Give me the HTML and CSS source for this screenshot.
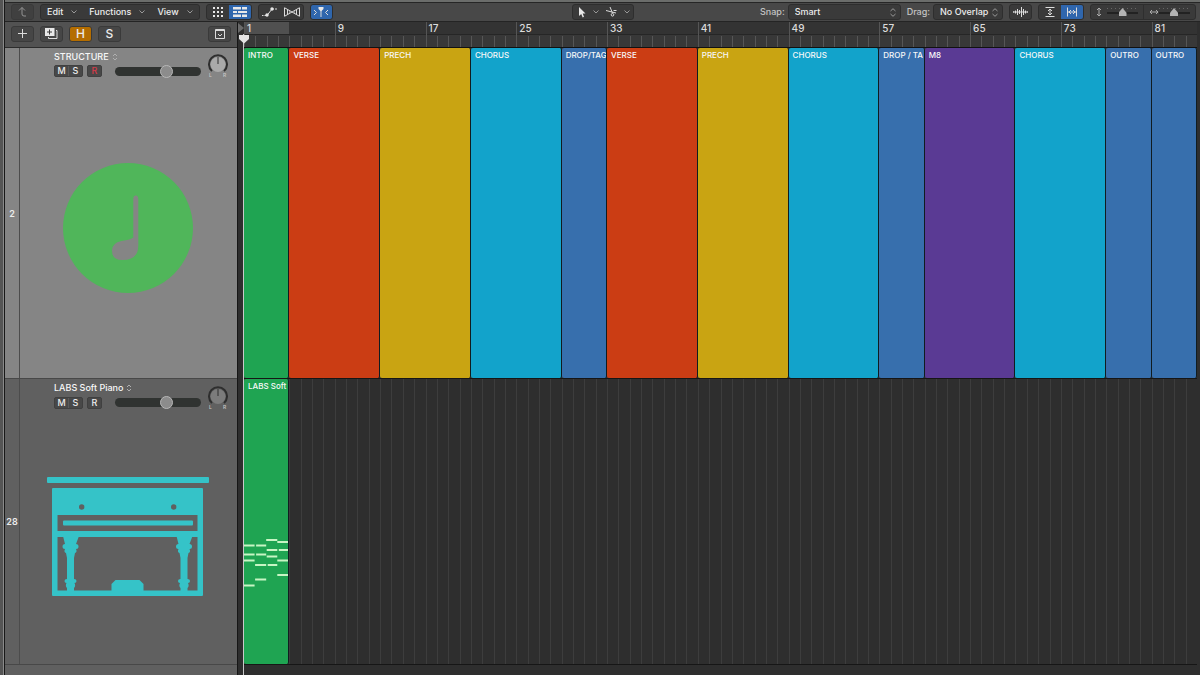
FILE: index.html
```html
<!DOCTYPE html>
<html lang="en">
<head>
    <meta charset="UTF-8">
    <meta name="viewport" content="width=device-width, initial-scale=1.0">
    <title>Tracks</title>
    <link rel="stylesheet" href="styles.css">
</head>
<body>
    <div class="edge"></div>
    <div class="window">
        <header class="toolbar">
            <button class="btn dim" aria-label="Up"><svg width="10" height="12" viewBox="0 0 10 12"><path d="M1 4.500 4 1.500 7 4.500M4 1.500V8q0 2 2 2h2"/></svg></button>
            <div class="group menus">
                <button>Edit <svg width="6" height="4" viewBox="0 0 6 4"><path d="M.5.5 3 3 5.500.5"/></svg></button>
                <button>Functions <svg width="6" height="4" viewBox="0 0 6 4"><path d="M.5.5 3 3 5.500.5"/></svg></button>
                <button>View <svg width="6" height="4" viewBox="0 0 6 4"><path d="M.5.5 3 3 5.500.5"/></svg></button>
            </div>
            <div class="group">
                <button class="seg" aria-label="Grid"><svg class="fill" width="10" height="10" viewBox="0 0 10 10"><path d="M0 0h2v2H0zM4 0h2v2H4zM8 0h2v2H8zM0 4h2v2H0zM4 4h2v2H4zM8 4h2v2H8zM0 8h2v2H0zM4 8h2v2H4zM8 8h2v2H8z"/></svg></button>
                <button class="seg on" aria-label="Tracks"><svg class="fill" width="14" height="10" viewBox="0 0 14 10"><path d="M0 0h8v2.500H0zM9 0h5v2.500H9zM0 4h4v2H0zM5 4h9v2H5zM0 7.500h8V10H0zM9 7.500h5V10H9z"/></svg></button>
            </div>
            <div class="group">
                <button class="seg" aria-label="Automation"><svg width="16" height="10" viewBox="0 0 16 10"><path d="M0 8.500h1.500M2.500 8.500H5L10 2h2M13 2h2"/><circle class="dot" cx="5" cy="8" r="1.700"/><circle class="dot" cx="10" cy="2" r="1.700"/></svg></button>
                <button class="seg" aria-label="Flex"><svg width="16" height="10" viewBox="0 0 16 10"><path d="M.5.5v9M15.500.5v9M1 1l14 8M1 9l14-8M3.500 3v4M12.500 3v4M5.500 4.500v1M10.500 4.500v1"/></svg></button>
            </div>
            <button class="btn on" aria-label="Catch playhead"><svg width="16" height="10" viewBox="0 0 16 10"><path d="M1 3 3.500 5.500 1 8M15 3 12.500 5.500 15 8M8 2v8"/><path class="dot" d="M5.500 0h5v2L8 4.500 5.500 2z"/></svg></button>
            <div class="space wide"></div>
            <div class="group tools">
                <button aria-label="Pointer tool"><svg class="fill" width="8" height="11" viewBox="0 0 8 11"><path d="M1 0v9l2.200-2L4.700 10.500l1.300-.7L4.700 6.500H7.500z"/></svg> <svg width="6" height="4" viewBox="0 0 6 4"><path d="M.5.5 3 3 5.500.5"/></svg></button>
                <button aria-label="Scissors tool"><svg width="11" height="10" viewBox="0 0 11 10"><path d="M0 3.500l10 2.500M4 0l2.500 6M7.500 3.500h3"/><circle cx="6.500" cy="7.800" r="1.300"/></svg> <svg width="6" height="4" viewBox="0 0 6 4"><path d="M.5.5 3 3 5.500.5"/></svg></button>
            </div>
            <div class="space"></div>
            <label for="snap">Snap:</label>
            <div class="pick pick-snap">
                <select id="snap"><option>Smart</option></select>
                <svg width="6" height="9" viewBox="0 0 6 9"><path d="M.5 3 3 .7 5.500 3M.5 6 3 8.300 5.500 6"/></svg>
            </div>
            <label for="drag">Drag:</label>
            <div class="pick pick-drag">
                <select id="drag"><option>No Overlap</option></select>
                <svg width="6" height="9" viewBox="0 0 6 9"><path d="M.5 3 3 .7 5.500 3M.5 6 3 8.300 5.500 6"/></svg>
            </div>
            <button class="btn" aria-label="Waveform zoom"><svg width="15" height="10" viewBox="0 0 15 10"><path d="M.5 4.500v1M2.500 3.500v3M4.500 2v6M6.500 3v4M8.500 0v10M10.500 2v6M12.500 3.500v3M14.500 4.500v1M0 5h15"/></svg></button>
            <div class="group">
                <button class="seg" aria-label="Vertical auto zoom"><svg width="10" height="12" viewBox="0 0 10 12"><path d="M.5 1.500h9M.5 10.500h9M5 3v6M3 5l2-2 2 2M3 7l2 2 2-2"/></svg></button>
                <button class="seg on" aria-label="Horizontal auto zoom"><svg width="12" height="10" viewBox="0 0 12 10"><path d="M1.500.5v9M10.500.5v9M2 5h8M5 3 3 5l2 2M7 3l2 2-2 2"/></svg></button>
            </div>
            <div class="group zooms">
                <label class="zoom"><svg width="6" height="10" viewBox="0 0 6 10"><path d="M3 1v8M1 3l2-2 2 2M1 7l2 2 2-2"/></svg><input type="range" value="50" aria-label="Vertical zoom"></label>
                <label class="zoom"><svg width="10" height="6" viewBox="0 0 10 6"><path d="M1 3h8M3 1 1 3l2 2M7 1l2 2-2 2"/></svg><input type="range" value="48" aria-label="Horizontal zoom"></label>
            </div>
        </header>

        <main>
            <aside>
                <div class="sidebar-top">
                    <button class="btn" aria-label="Add track"><svg width="9" height="9" viewBox="0 0 9 9"><path d="M4.500 0v9M0 4.500h9"/></svg></button>
                    <button class="btn" aria-label="Duplicate track"><svg width="13" height="11" viewBox="0 0 13 11"><path class="dot" d="M0 0h9.500v8H0z"/><path d="M11 2.500h1v8H3.500V9"/><path class="cut" d="M4.500 1.500v5M2 4h5"/></svg></button>
                    <button class="btn hide">H</button>
                    <button class="btn solo">S</button>
                    <button class="btn last" aria-label="Header options"><svg width="10" height="10" viewBox="0 0 10 10"><path d="M.5.5h9v9h-9zM.5 1.500h9M3 5l2 2 2-2"/></svg></button>
                </div>
                <section class="track selected">
                    <div class="number">2</div>
                    <div class="track-body">
                        <div class="head">
                            <div>
                                <div class="name">STRUCTURE <svg width="6" height="8" viewBox="0 0 6 8"><path d="M1 3 3 1l2 2M1 5l2 2 2-2"/></svg></div>
                                <div class="controls">
                                    <div class="ms"><button>M</button><button>S</button></div>
                                    <button class="rec armed">R</button>
                                    <input class="volume" type="range" value="62" aria-label="Volume">
                                </div>
                            </div>
                            <svg class="knob" width="20" height="26" viewBox="0 0 20 26"><path class="ring" d="M4 17A9 9 0 1 1 16 17"/><circle cx="10" cy="10.500" r="7.500"/><path class="needle" d="M10 3v7"/><text x="1" y="23">L</text><text x="15" y="23">R</text></svg>
                        </div>
                        <div class="picture">
                            <svg width="132" height="132" viewBox="0 0 132 132"><circle cx="66" cy="66" r="65" fill="#50b65a"/><path d="M71.300 75.500V37q0-3.500 2.500-3.500t2.500 3.500v46.500q0 14.500-16 14.500Q50 98 50 88.500q0-7.500 9.500-9.500 9.500-1.200 11.800-3.500z" fill="#858585"/></svg>
                        </div>
                    </div>
                </section>
                <section class="track piano">
                    <div class="number">28</div>
                    <div class="track-body">
                        <div class="head">
                            <div>
                                <div class="name">LABS Soft Piano <svg width="6" height="8" viewBox="0 0 6 8"><path d="M1 3 3 1l2 2M1 5l2 2 2-2"/></svg></div>
                                <div class="controls">
                                    <div class="ms"><button>M</button><button>S</button></div>
                                    <button class="rec">R</button>
                                    <input class="volume" type="range" value="62" aria-label="Volume">
                                </div>
                            </div>
                            <svg class="knob" width="20" height="26" viewBox="0 0 20 26"><path class="ring" d="M4 17A9 9 0 1 1 16 17"/><circle cx="10" cy="10.500" r="7.500"/><path class="needle" d="M10 3v7"/><text x="1" y="23">L</text><text x="15" y="23">R</text></svg>
                        </div>
                        <div class="picture">
                            <svg width="164" height="120" viewBox="0 0 164 120">
                                <g fill="#35c3c8">
                                    <rect x="1" y="0" width="162" height="6" rx="1"/>
                                    <path fill-rule="evenodd" d="M7 11h149q1 0 1 1v106q0 1-1 1H7q-1 0-1-1V12q0-1 1-1zM11.500 38v16h140V38zM11.500 60v53.500h54V107l4-4h24l4 4v6.500h54V60z"/>
                                    <circle cx="35.700" cy="30" r="2.700" fill="#606060"/>
                                    <circle cx="127.700" cy="30" r="2.700" fill="#606060"/>
                                    <rect x="17" y="43.500" width="130" height="5" rx="1"/>
                                    <path id="leg" d="M17 59h16l-3 8q2.500 0 2.500 2.500T30 72q1.500 3-1 4l-1 5v21q2.500 0 2.500 2t-2 2q1.500 3-.5 5v3h-7v-3q-2-2-.5-5-2 0-2-2t2.500-2V81l-1-5q-2.500-1-1-4-2.500 0-2.500-2.500t2.500-2.500z"/>
                                    <use href="#leg" x="113.500"/>
                                </g>
                            </svg>
                        </div>
                    </div>
                </section>
                <div class="below"></div>
            </aside>

            <div class="timeline">
                <div class="ruler">
                    <svg class="start" width="6" height="10" viewBox="0 0 6 10"><path d="M0 0 6 5 0 10z"/></svg>
                    <div class="cycle"></div>
                    <ol class="marks">
                        <li>1</li>
                        <li>9</li>
                        <li>17</li>
                        <li>25</li>
                        <li>33</li>
                        <li>41</li>
                        <li>49</li>
                        <li>57</li>
                        <li>65</li>
                        <li>73</li>
                        <li class="half">81</li>
                    </ol>
                    <div class="ticks"></div>
                </div>
                <div class="lane lane-structure">
                    <div class="region half green">INTRO</div>
                    <div class="region red">VERSE</div>
                    <div class="region yellow">PRECH</div>
                    <div class="region cyan">CHORUS</div>
                    <div class="region half blue">DROP/TAG</div>
                    <div class="region red">VERSE</div>
                    <div class="region yellow">PRECH</div>
                    <div class="region cyan">CHORUS</div>
                    <div class="region half blue">DROP / TA</div>
                    <div class="region purple">M8</div>
                    <div class="region cyan">CHORUS</div>
                    <div class="region half blue">OUTRO</div>
                    <div class="region half blue">OUTRO</div>
                </div>
                <div class="lane lane-piano">
                    <div class="region half green midi">
                        <span>LABS Soft</span>
                        <svg class="notes" viewBox="0 0 44 48" preserveAspectRatio="none"><path d="M0 6.500h10.500M12 6.500h10M22 1h11M33 3h11M22.500 11H33M34.500 11H44M0 15.500h10.500M12 15.500h10M22.500 17.500H33M0 21.500h10.500M33 21.500h11M11 26h11M23.500 26H33M33 36h11M11 40.500h11M0 46.500h10.500"/></svg>
                    </div>
                </div>
                <div class="below"></div>
                <div class="playhead"><svg width="12" height="10" viewBox="0 0 12 10"><path d="M1 1h10v4L6 9.500 1 5z"/></svg></div>
            </div>
        </main>
    </div>
</body>
</html>
```
FILE: styles.css
```css
*{
    box-sizing: border-box;
    margin: 0;
    padding: 0;
}

body{
    display: flex;
    height: 100vh;
    overflow: hidden;
    background: #2c2c2c;
    color: #ececec;
    font-family: Inter, "Liberation Sans", sans-serif;
    font-size: 9px;
    font-weight: 500;
    line-height: 12px;
}

button, select{
    font: inherit;
    color: inherit;
    border: 0;
    background: none;
    appearance: none;
}

button{
    display: flex;
    align-items: center;
    justify-content: center;
}

svg{
    display: block;
    flex: none;
    fill: none;
    stroke: #dcdcdc;
    stroke-width: 1;
}

svg.fill, .dot{
    fill: #e8e8e8;
    stroke: none;
}

.cut{
    stroke: #3a3a3a;
}

.edge{
    width: 5px;
    flex: none;
    background: #555;
    border-right: 1px solid #181818;
    box-shadow: inset -1px 0 #8a8a8a;
}

.window{
    flex: 1;
    min-width: 0;
    display: flex;
    flex-direction: column;
    border-top: 2px solid #6b6d6b;
}

/* toolbar */
.toolbar{
    display: flex;
    align-items: center;
    gap: 6px;
    height: 20px;
    padding: 0 4px 0 6px;
    background: #484848;
    border-top: 1px solid #262626;
    border-bottom: 1px solid #242424;
}

.btn, .group, .pick{
    height: 16px;
    border: 1px solid #2e2e2e;
    border-radius: 3px;
    background: #3a3a3a;
    flex: none;
}

.btn{
    width: 23px;
}

.group{
    display: flex;
    overflow: hidden;
}

.seg{
    width: 22px;
}

.on{
    background: #2f66ad;
}

.dim{
    opacity: 0.5;
}

.menus button{
    gap: 8px;
    padding: 0 6px;
}

.menus svg, .tools svg + svg{
    stroke: #999;
}

.tools button{
    gap: 7px;
    width: 30px;
}

.space{
    flex: 1;
}

.space.wide{
    flex: 2;
}

.toolbar > label{
    color: #c4c4c4;
    margin-right: -3px;
}

.pick{
    position: relative;
}

.pick select{
    width: 100%;
    height: 14px;
    padding: 0 6px;
}

.pick svg{
    position: absolute;
    right: 4px;
    top: 3px;
    pointer-events: none;
    stroke: #999;
}

.pick-snap{
    width: 113px;
}

.pick-drag{
    width: 70px;
}

.zoom{
    display: flex;
    align-items: center;
    justify-content: space-between;
    width: 52px;
    padding: 0 5px;
}

.zoom svg{
    stroke: #aaa;
}

.zoom + .zoom{
    border-left: 1px solid #2e2e2e;
}

.zoom input{
    appearance: none;
    width: 31px;
    height: 14px;
    background:
        repeating-linear-gradient(to right, #666 0 1px, transparent 1px 4px) 0 3px / 100% 1px no-repeat,
        linear-gradient(#222, #222) 0 7px / 100% 2px no-repeat;
}

.zoom input::-webkit-slider-thumb{
    appearance: none;
    width: 8px;
    height: 8px;
    background: #b4b4b4;
    clip-path: polygon(50% 0, 100% 60%, 100% 100%, 0 100%, 0 60%);
}

/* track headers */
main{
    flex: 1;
    min-height: 0;
    display: flex;
}

aside{
    width: 232px;
    flex: none;
    display: flex;
    flex-direction: column;
}

.sidebar-top{
    display: flex;
    align-items: center;
    gap: 6px;
    height: 26px;
    padding: 0 6px 2px;
    background: #525252;
    border-bottom: 1px solid #2c2c2c;
}

.sidebar-top .btn{
    background: #464646;
    border-color: #3a3a3a;
}

.sidebar-top .hide{
    background: #b46d00;
}

.hide, .solo{
    font-size: 12px;
}

.last{
    margin-left: auto;
}

.track{
    display: flex;
    background: #606060;
    border-bottom: 1px solid #484848;
}

.selected{
    background: #858585;
}

.track.selected, .lane-structure{
    flex: 331 0 0;
}

.track.piano, .lane-piano{
    flex: 286 0 0;
}

.number{
    width: 15px;
    display: flex;
    align-items: center;
    justify-content: center;
    padding-top: 2px;
    border-right: 1px solid #4c4c4c;
    font-weight: 600;
}

.track-body{
    flex: 1;
    display: flex;
    flex-direction: column;
}

.head{
    display: flex;
    justify-content: space-between;
    height: 30px;
    padding: 2px 9px 0 34px;
}

.piano .head{
    height: 32px;
    padding-top: 3px;
}

.name{
    display: flex;
    align-items: center;
    gap: 3px;
    height: 13px;
    color: #f8f8f8;
}

.name svg{
    stroke: #b0b0b0;
}

.controls{
    display: flex;
    align-items: center;
    height: 16px;
}

.ms, .rec{
    height: 12px;
    border-radius: 2px;
    background: #484848;
    border: 1px solid #404040;
}

.ms{
    display: flex;
    width: 29px;
    margin-right: 4px;
}

.ms button{
    flex: 1;
}

.ms button + button{
    border-left: 1px solid #5a5a5a;
}

.rec{
    width: 15px;
}

.armed{
    color: #d43a48;
}

.volume{
    appearance: none;
    width: 86px;
    height: 13px;
    margin-left: 13px;
    background: none;
}

.volume::-webkit-slider-runnable-track{
    height: 9px;
    border-radius: 5px;
    background: #303331;
}

.volume::-webkit-slider-thumb{
    appearance: none;
    width: 13px;
    height: 13px;
    margin-top: -2px;
    border-radius: 50%;
    border: 1px solid #b8b8b8;
    background: #8c8c8c;
}

.knob{
    margin-top: 4px;
}

.knob circle{
    fill: #aaa;
    stroke: none;
}

.piano .knob circle{
    fill: #7c7c7c;
}

.ring{
    stroke: #2e2e2e;
    stroke-width: 2;
}

.needle{
    stroke: #2e2e2e;
}

.knob text{
    fill: #c8c8c8;
    stroke: none;
    font-size: 5px;
}

.picture{
    flex: 1;
    display: flex;
    align-items: center;
    justify-content: center;
    padding-right: 2px;
}

.picture svg{
    stroke: none;
}

.below{
    height: 10px;
    flex: none;
}

aside .below{
    background: #606060;
}

/* timeline */
.timeline{
    position: relative;
    flex: 1;
    min-width: 0;
    display: flex;
    flex-direction: column;
    padding: 0 3px 0 6px;
    border-left: 1px solid #161616;
    background: #2e2e2e;
}

.ruler{
    position: relative;
    height: 26px;
    flex: none;
    border-bottom: 1px solid #111;
    background: linear-gradient(#333 12px, #262626 12px 13px, #383838 13px);
}

.start{
    position: absolute;
    left: -6px;
    top: 1px;
    fill: #6a6a6a;
    stroke: none;
}

.cycle{
    position: absolute;
    left: 0;
    top: 0;
    width: calc(100% / 21);
    height: 12px;
    background: #505050;
}

.marks{
    position: absolute;
    inset: 0;
    display: grid;
    grid-template-columns: repeat(84, 1fr);
    list-style-type: none;
    color: #dcdcdc;
    font-size: 10px;
}

.marks li{
    grid-column: span 8;
    border-left: 1px solid #555;
    padding-left: 2px;
}

.ticks{
    height: 11px;
    margin-top: 14px;
    background: repeating-linear-gradient(to right, #565656 0 1px, transparent 1px calc(100% / 84));
}

.lane{
    display: grid;
    grid-template-columns: repeat(84, 1fr);
    border-bottom: 1px solid #161616;
    background: repeating-linear-gradient(to right, #3d3d3d 0 1px, transparent 1px calc(100% / 84));
}

.region{
    grid-column: span 8;
    min-width: 0;
    overflow: hidden;
    white-space: nowrap;
    padding: 1px 0 0 4px;
    border-right: 1px solid #101c20;
    border-radius: 2px;
    font-size: 8px;
    color: #f8f8f8;
}

.marks li.half, .region.half{
    grid-column: span 4;
}

.green{
    background: #1fa452;
}

.red{
    background: #cb3d14;
}

.yellow{
    background: #c9a412;
}

.cyan{
    background: #12a3cb;
}

.blue{
    background: #376fad;
}

.purple{
    background: #5a3a94;
}

.midi{
    display: grid;
    grid-template-rows: 12px 146fr 48px 77fr;
    padding-left: 0;
}

.midi span{
    padding-left: 4px;
}

.notes{
    grid-row: 3;
    width: 100%;
    height: 48px;
    stroke: #c8f5c4;
    stroke-width: 2;
}

.playhead{
    position: absolute;
    left: 0;
    top: 12px;
    bottom: 0;
    width: 12px;
    background: linear-gradient(#c8c8c8, #c8c8c8) 5px 0 / 1px 100% no-repeat;
}

.playhead svg{
    fill: #e4e4e4;
    stroke: none;
}
```
